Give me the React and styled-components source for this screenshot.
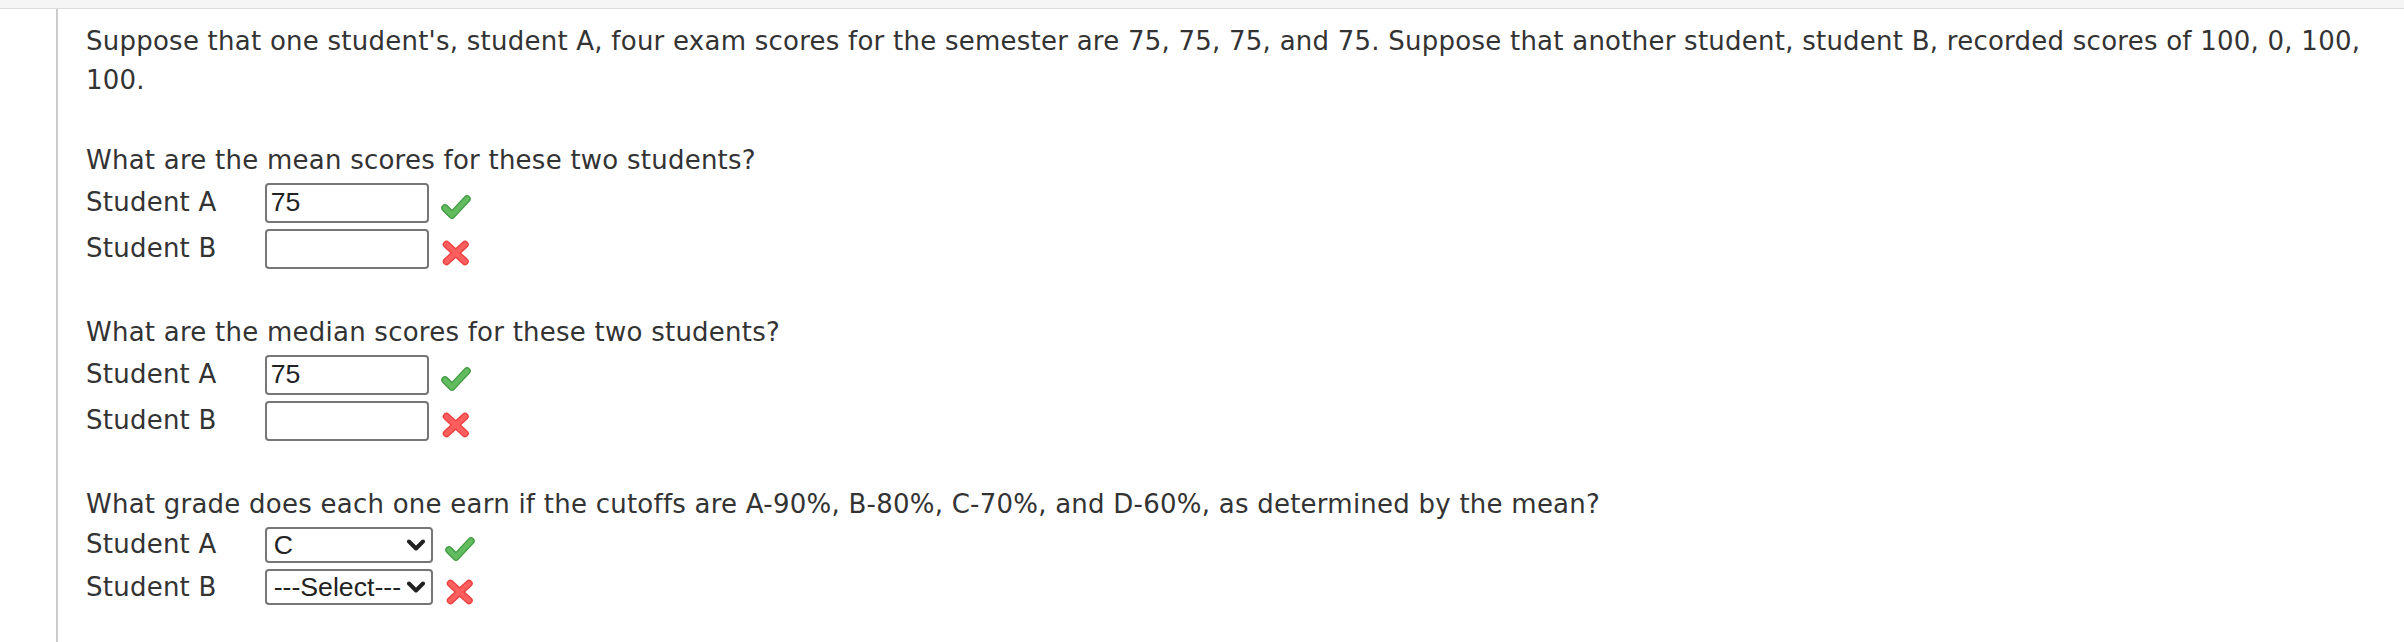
import React from 'react';
import styled, { createGlobalStyle } from 'styled-components';

const GlobalStyle = createGlobalStyle`
  html, body { margin: 0; padding: 0; background: #fff; }
  body { font-family: "DejaVu Sans", Verdana, sans-serif; color: #333; }
`;

const Page = styled.div`
  min-height: 642px;
  display: flex;
  flex-direction: column;
`;

const TopBar = styled.div`
  height: 8px;
  background: #f5f5f5;
  border-bottom: 1px solid #dcdcdc;
`;

const Body = styled.div`
  display: flex;
  flex: 1;
`;

const Gutter = styled.div`
  width: 56px;
  flex: none;
`;

const Content = styled.main`
  flex: 1;
  border-left: 2px solid #cbcbcb;
  padding: 13px 30px 0 28px;
  font-size: 26px;
  line-height: 39px;
  letter-spacing: 0.24px;
`;

const Intro = styled.p`
  margin: 0 0 41px;
`;

const Section = styled.section`
  & + & {
    margin-top: 44.5px;
  }
`;

const Question = styled.p`
  margin: 0;
`;

const Rows = styled.div`
  display: flex;
  flex-direction: column;
  gap: ${(p) => p.$gap}px;
  margin-top: 2.5px;
`;

const Row = styled.div`
  display: flex;
  align-items: center;
  height: ${(p) => p.$h}px;
`;

const Label = styled.span`
  width: 178.7px;
  flex: none;
`;

const fieldFont = `26.67px "Liberation Sans", Arial, sans-serif`;

const TextInput = styled.input`
  box-sizing: border-box;
  width: 164.3px;
  height: 40px;
  margin: 0;
  border: 2px solid #767676;
  border-radius: 4px;
  padding: 2px 4px;
  font: ${fieldFont};
  color: #222;
  background: #fff;
  outline: none;
`;

const SelectBox = styled.div`
  box-sizing: border-box;
  width: 168px;
  height: 36px;
  display: flex;
  align-items: center;
  border: 2px solid #767676;
  border-radius: 4px;
  padding: 0 5px 0 0;
  background: #fff;
`;

const Select = styled.select`
  appearance: none;
  -webkit-appearance: none;
  flex: 1;
  min-width: 0;
  height: 100%;
  margin: 0;
  border: none;
  padding: 0 0 0 7px;
  background: transparent;
  font: ${fieldFont};
  color: #222;
  outline: none;
`;

const Chevron = styled.svg`
  flex: none;
  width: 20px;
  height: 12px;
`;

const Mark = styled.svg`
  flex: none;
  width: 30px;
  height: 26px;
  margin-left: 12px;
  margin-top: 9px;
`;

const Check = () => (
  <Mark viewBox="0 0 30 26" aria-label="correct">
    <path d="M4 14 L11 21 L26 5" fill="none" stroke="#3f9a40" strokeWidth="7.5" strokeLinecap="round" strokeLinejoin="round" />
    <path d="M4 14 L11 21 L26 5" fill="none" stroke="#62bb5f" strokeWidth="5" strokeLinecap="round" strokeLinejoin="round" />
  </Mark>
);

const Cross = () => (
  <Mark viewBox="0 0 30 26" aria-label="incorrect">
    <path d="M5.5 4.5 L24 21.5 M24 4.5 L5.5 21.5" fill="none" stroke="#ee3e3e" strokeWidth="7.5" strokeLinecap="round" />
    <path d="M5.5 4.5 L24 21.5 M24 4.5 L5.5 21.5" fill="none" stroke="#ff5e5e" strokeWidth="5" strokeLinecap="round" />
  </Mark>
);

const Status = ({ ok }) => (ok ? <Check /> : <Cross />);

const GRADES = ['---Select---', 'A', 'B', 'C', 'D', 'F'];

const GradeSelect = ({ value }) => (
  <SelectBox>
    <Select defaultValue={value}>
      {GRADES.map((g) => (
        <option key={g} value={g}>{g}</option>
      ))}
    </Select>
    <Chevron viewBox="0 0 20 12">
      <path d="M3 2.5 L10 9.5 L17 2.5" fill="none" stroke="#222" strokeWidth="4" strokeLinecap="round" strokeLinejoin="round" />
    </Chevron>
  </SelectBox>
);

const textSections = [
  {
    q: 'What are the mean scores for these two students?',
    rows: [
      { label: 'Student A', value: '75', ok: true },
      { label: 'Student B', value: '', ok: false },
    ],
  },
  {
    q: 'What are the median scores for these two students?',
    rows: [
      { label: 'Student A', value: '75', ok: true },
      { label: 'Student B', value: '', ok: false },
    ],
  },
];

const gradeSection = {
  q: 'What grade does each one earn if the cutoffs are A-90%, B-80%, C-70%, and D-60%, as determined by the mean?',
  rows: [
    { label: 'Student A', value: 'C', ok: true },
    { label: 'Student B', value: '---Select---', ok: false },
  ],
};

export default function App() {
  return (
    <>
      <GlobalStyle />
      <Page>
        <TopBar />
        <Body>
          <Gutter />
          <Content>
            <Intro>
              Suppose that one student's, student A, four exam scores for the semester are 75, 75, 75, and 75. Suppose that another student, student B, recorded scores of 100, 0, 100, 100.
            </Intro>
            {textSections.map((s) => (
              <Section key={s.q}>
                <Question>{s.q}</Question>
                <Rows $gap={6}>
                  {s.rows.map((r) => (
                    <Row key={r.label} $h={40}>
                      <Label>{r.label}</Label>
                      <TextInput type="text" defaultValue={r.value} />
                      <Status ok={r.ok} />
                    </Row>
                  ))}
                </Rows>
              </Section>
            ))}
            <Section>
              <Question>{gradeSection.q}</Question>
              <Rows $gap={6.5}>
                {gradeSection.rows.map((r) => (
                  <Row key={r.label} $h={36}>
                    <Label>{r.label}</Label>
                    <GradeSelect value={r.value} />
                    <Status ok={r.ok} />
                  </Row>
                ))}
              </Rows>
            </Section>
          </Content>
        </Body>
      </Page>
    </>
  );
}
